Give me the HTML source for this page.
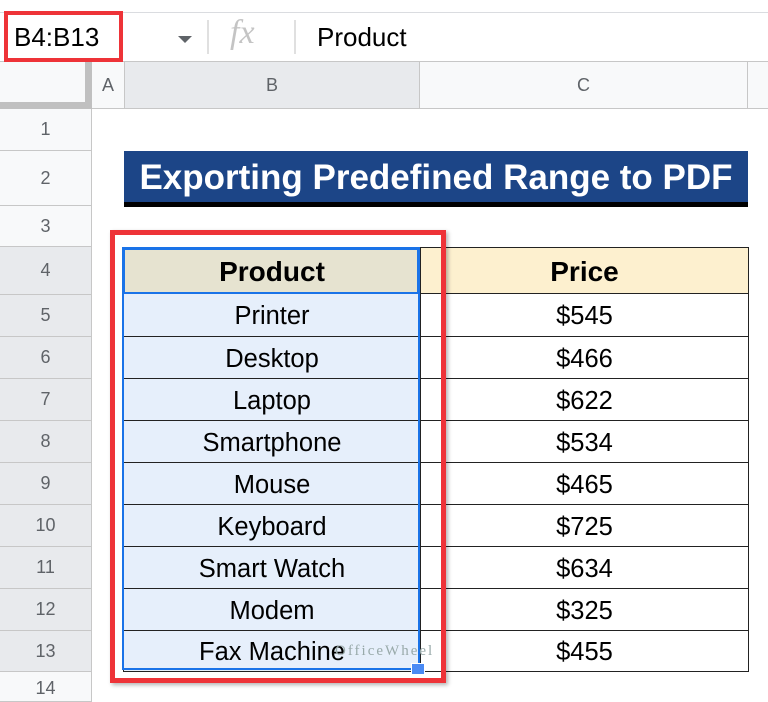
<!DOCTYPE html><html><head><style>
body{margin:0;width:768px;height:689px;overflow:hidden;background:#fff;font-family:"Liberation Sans",Arial,sans-serif;position:relative}
.a{position:absolute;box-sizing:border-box}
.rh{position:absolute;left:0;width:92px;border-bottom:1px solid #c7c7c7;border-right:1px solid #c7c7c7;background:#f8f9fa;color:#5f6368;font-size:18px;display:flex;align-items:center;justify-content:center;box-sizing:border-box}
.rh.s{background:#e8eaed}
.c{position:absolute;display:flex;align-items:center;justify-content:center;font-size:25.5px;color:#000;box-sizing:border-box;border-bottom:1px solid #222;padding-top:3px}
</style></head><body>
<div class="a" style="left:0;top:12px;width:768px;height:50px;border-top:1px solid #dadce0;border-bottom:1px solid #c7c7c7"></div>
<div class="a" style="left:14px;top:22px;font-size:26px;color:#000">B4:B13</div>
<div class="a" style="left:178px;top:36px;width:0;height:0;border-left:7px solid transparent;border-right:7px solid transparent;border-top:7px solid #5f6368"></div>
<div class="a" style="left:207px;top:20px;width:2px;height:34px;background:#e0e0e0"></div>
<div class="a" style="left:230px;top:14px;font-size:34px;font-style:italic;font-family:'Liberation Serif',serif;color:#c4c4c4">fx</div>
<div class="a" style="left:294px;top:20px;width:2px;height:34px;background:#e0e0e0"></div>
<div class="a" style="left:317px;top:22px;font-size:26px;color:#000">Product</div>
<div class="a" style="left:4px;top:11px;width:119px;height:51px;border:4px solid #ee3338"></div>
<div class="a" style="left:0;top:62px;width:92px;height:47px;background:#f8f9fa;border-right:7px solid #c0c0c0;border-bottom:7px solid #c0c0c0"></div>
<div class="a" style="left:92px;top:62px;width:33px;height:47px;background:#f8f9fa;border-right:1px solid #c7c7c7;border-bottom:1px solid #c7c7c7;color:#5f6368;font-size:18px;display:flex;align-items:center;justify-content:center">A</div>
<div class="a" style="left:125px;top:62px;width:295px;height:47px;background:#e8eaed;border-right:1px solid #c7c7c7;border-bottom:1px solid #c7c7c7;color:#5f6368;font-size:18px;display:flex;align-items:center;justify-content:center">B</div>
<div class="a" style="left:420px;top:62px;width:328px;height:47px;background:#f8f9fa;border-right:1px solid #c7c7c7;border-bottom:1px solid #c7c7c7;color:#5f6368;font-size:18px;display:flex;align-items:center;justify-content:center">C</div>
<div class="a" style="left:748px;top:62px;width:20px;height:47px;background:#f8f9fa;border-bottom:1px solid #c7c7c7"></div>
<div class="rh" style="top:109px;height:42px">1</div>
<div class="rh" style="top:151px;height:55px">2</div>
<div class="rh" style="top:206px;height:41px">3</div>
<div class="rh s" style="top:247px;height:48px">4</div>
<div class="rh s" style="top:295px;height:42px">5</div>
<div class="rh s" style="top:337px;height:42px">6</div>
<div class="rh s" style="top:379px;height:42px">7</div>
<div class="rh s" style="top:421px;height:42px">8</div>
<div class="rh s" style="top:463px;height:42px">9</div>
<div class="rh s" style="top:505px;height:42px">10</div>
<div class="rh s" style="top:547px;height:42px">11</div>
<div class="rh s" style="top:589px;height:42px">12</div>
<div class="rh s" style="top:631px;height:41px">13</div>
<div class="rh" style="top:672px;height:30px;align-items:flex-start;padding-top:6px">14</div>
<div class="a" style="left:124px;top:151px;width:624px;height:56px;background:#1c4587;border-bottom:5px solid #000;color:#fff;font-weight:bold;font-size:35px;display:flex;align-items:center;justify-content:center;padding-top:3px">Exporting Predefined Range to PDF</div>
<div class="a" style="left:123px;top:247px;width:626px;height:425px;border:1px solid #222"></div>
<div class="c" style="left:124px;top:248px;width:296px;height:46px;background:#e6e3d0;font-weight:bold;font-size:28px">Product</div>
<div class="c" style="left:420px;top:248px;width:328px;height:46px;background:#fdf0cf;font-weight:bold;font-size:28px;border-left:1px solid #222">Price</div>
<div class="c" style="left:124px;top:294px;width:296px;height:43px;background:#e6effb">Printer</div><div class="c" style="left:420px;top:294px;width:328px;height:43px;border-left:1px solid #222">$545</div>
<div class="c" style="left:124px;top:337px;width:296px;height:42px;background:#e6effb">Desktop</div><div class="c" style="left:420px;top:337px;width:328px;height:42px;border-left:1px solid #222">$466</div>
<div class="c" style="left:124px;top:379px;width:296px;height:42px;background:#e6effb">Laptop</div><div class="c" style="left:420px;top:379px;width:328px;height:42px;border-left:1px solid #222">$622</div>
<div class="c" style="left:124px;top:421px;width:296px;height:42px;background:#e6effb">Smartphone</div><div class="c" style="left:420px;top:421px;width:328px;height:42px;border-left:1px solid #222">$534</div>
<div class="c" style="left:124px;top:463px;width:296px;height:42px;background:#e6effb">Mouse</div><div class="c" style="left:420px;top:463px;width:328px;height:42px;border-left:1px solid #222">$465</div>
<div class="c" style="left:124px;top:505px;width:296px;height:42px;background:#e6effb">Keyboard</div><div class="c" style="left:420px;top:505px;width:328px;height:42px;border-left:1px solid #222">$725</div>
<div class="c" style="left:124px;top:547px;width:296px;height:42px;background:#e6effb">Smart Watch</div><div class="c" style="left:420px;top:547px;width:328px;height:42px;border-left:1px solid #222">$634</div>
<div class="c" style="left:124px;top:589px;width:296px;height:42px;background:#e6effb">Modem</div><div class="c" style="left:420px;top:589px;width:328px;height:42px;border-left:1px solid #222">$325</div>
<div class="c" style="left:124px;top:631px;width:296px;height:40px;background:#e6effb;border-bottom:none">Fax Machine</div><div class="c" style="left:420px;top:631px;width:328px;height:40px;border-left:1px solid #222;border-bottom:none">$455</div>
<div class="a" style="left:122px;top:247px;width:298px;height:423px;border:2px solid #1a73e8"></div>
<div class="a" style="left:123px;top:248px;width:296px;height:46px;border:2px solid #1a73e8"></div>
<div class="a" style="left:411px;top:663px;width:14px;height:12px;background:#4a8af4;border:1px solid #fff"></div>
<div class="a" style="left:335px;top:643px;font-size:15px;color:#9aa;letter-spacing:2px;font-family:'Liberation Serif',serif">OfficeWheel</div>
<div class="a" style="left:110px;top:230px;width:336px;height:453px;border:5px solid #ee3338;box-shadow:2px 2px 4px rgba(0,0,0,.3)"></div>
</body></html>
